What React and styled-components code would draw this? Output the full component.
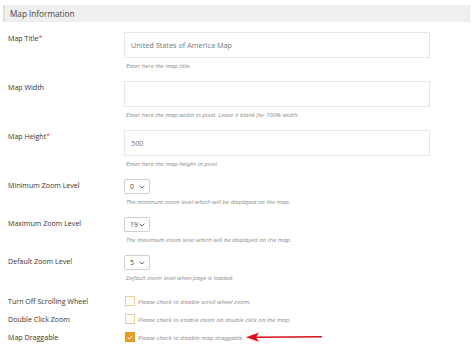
import React from "react";
import styled, { createGlobalStyle } from "styled-components";

const GlobalStyle = createGlobalStyle`
  body {
    margin: 0;
    background: #fff;
    font-family: "Open Sans", "Noto Sans", sans-serif;
  }
`;

const Page = styled.div`
  width: 474px;
  height: 348px;
  padding-top: 5px;
  box-sizing: border-box;
  overflow: hidden;
`;

const Header = styled.div`
  margin: 0 4px 10px 3px;
  height: 17px;
  background: #efefef;
  border-left: 2px solid #e2dfcf;
  border-right: 1px solid #e6e6e6;
  display: flex;
  align-items: center;
  padding-left: 5px;
  font-size: 8.2px;
  color: #444;
`;

const Row = styled.div`
  display: grid;
  grid-template-columns: 116px 1fr;
  padding-left: 8px;
  margin-bottom: ${p => p.gap}px;
`;

const Label = styled.div`
  font-size: 7.1px;
  font-weight: 500;
  color: #333;
  line-height: 12px;
  white-space: nowrap;
  span {
    color: #d9534f;
  }
`;

const Field = styled.div`
  display: flex;
  flex-direction: column;
  align-items: flex-start;
`;

const TextInput = styled.div`
  width: 306px;
  height: 26px;
  box-sizing: border-box;
  border: 1px solid #e6e6e6;
  display: flex;
  align-items: center;
  padding-left: 6px;
  font-size: 7.3px;
  color: #777;
`;

const Help = styled.div`
  margin-top: 3px;
  padding-left: 2px;
  font-size: 6.1px;
  font-style: italic;
  color: #8a8a8a;
  line-height: 10px;
  white-space: nowrap;
`;

const Select = styled.div`
  width: 26px;
  height: 15px;
  box-sizing: border-box;
  border: 1px solid #cfcfcf;
  border-radius: 2px;
  display: flex;
  align-items: center;
  justify-content: space-between;
  padding: 0 4px 0 5px;
  font-size: 6.8px;
  color: #444;
`;

const CheckLine = styled.div`
  display: flex;
  align-items: center;
  height: 12px;
  padding-left: 1px;
`;

const Box = styled.div`
  width: 10px;
  height: 10px;
  box-sizing: border-box;
  border: 1px solid ${p => (p.checked ? "#e19a1f" : "#e9cf9c")};
  background: ${p => (p.checked ? "#e6a125" : "#fffdf8")};
  display: flex;
  align-items: center;
  justify-content: center;
  margin-right: 3px;
`;

const CheckText = styled.span`
  font-size: 6.1px;
  font-style: italic;
  color: #8a8a8a;
  white-space: nowrap;
`;

const Arrow = styled.svg`
  margin-left: 2px;
  flex: none;
`;

const Chevron = () => (
  <svg width="6" height="4" viewBox="0 0 6 4">
    <path d="M0.6 0.8 L3 3 L5.4 0.8" fill="none" stroke="#555" strokeWidth="0.9" />
  </svg>
);

const inputRows = [
  { label: "Map Title", req: true, value: "United States of America Map", help: "Enter here the map title." },
  { label: "Map Width", value: "", help: "Enter here the map width in pixel. Leave it blank for 100% width." },
  { label: "Map Height", req: true, value: "500", help: "Enter here the map height in pixel." },
];

const selectRows = [
  { label: "Minimum Zoom Level", value: "0", help: "The minimum zoom level which will be displayed on the map.", gap: 10 },
  { label: "Maximum Zoom Level", value: "19", help: "The maximum zoom level which will be displayed on the map.", gap: 10 },
  { label: "Default Zoom Level", value: "5", help: "Default zoom level when page is loaded.", gap: 12 },
];

const checkRows = [
  { label: "Turn Off Scrolling Wheel", help: "Please check to disable scroll wheel zoom." },
  { label: "Double Click Zoom", help: "Please check to enable zoom on double click on the map." },
  { label: "Map Draggable", help: "Please check to disable map draggable.", checked: true, arrow: true },
];

export default function App() {
  return (
    <Page>
      <GlobalStyle />
      <Header>Map Information</Header>
      {inputRows.map(r => (
        <Row key={r.label} gap={10}>
          <Label>
            {r.label}
            {r.req && <span>*</span>}
          </Label>
          <Field>
            <TextInput>{r.value}</TextInput>
            <Help>{r.help}</Help>
          </Field>
        </Row>
      ))}
      {selectRows.map(r => (
        <Row key={r.label} gap={r.gap}>
          <Label>{r.label}</Label>
          <Field>
            <Select>
              {r.value}
              <Chevron />
            </Select>
            <Help>{r.help}</Help>
          </Field>
        </Row>
      ))}
      {checkRows.map(r => (
        <Row key={r.label} gap={6}>
          <Label>{r.label}</Label>
          <CheckLine>
            <Box checked={r.checked}>
              {r.checked && (
                <svg width="6" height="5" viewBox="0 0 6 5">
                  <path d="M0.8 2.6 L2.4 4 L5.2 0.9" fill="none" stroke="#fff" strokeWidth="1" />
                </svg>
              )}
            </Box>
            <CheckText>{r.help}</CheckText>
            {r.arrow && (
              <Arrow width="78" height="10" viewBox="0 0 78 10">
                <path d="M10 4.6 L76 4 L76 5.6 L10 6 Z" fill="#d9121b" />
                <path d="M0 5.2 L13 0.5 L10 5.2 L13 9.8 Z" fill="#d9121b" />
              </Arrow>
            )}
          </CheckLine>
        </Row>
      ))}
    </Page>
  );
}
